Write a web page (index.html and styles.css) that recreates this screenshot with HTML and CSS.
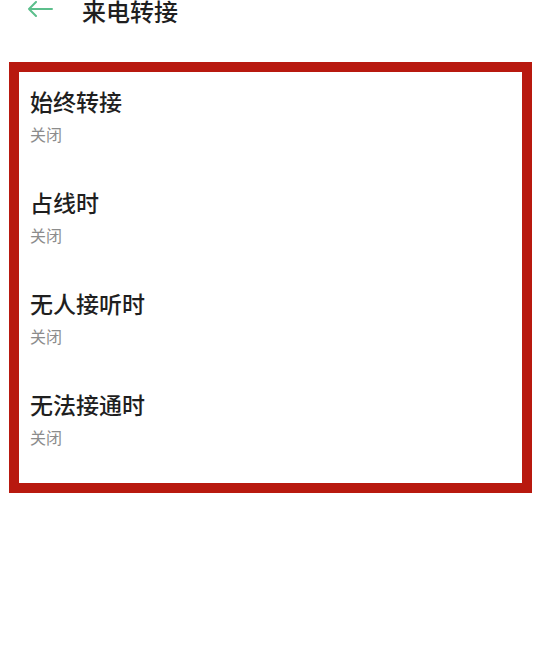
FILE: index.html
```html
<!DOCTYPE html>
<html lang="zh-CN">
<head>
    <meta charset="UTF-8">
    <title>来电转接</title>
    <link rel="stylesheet" href="styles.css">
</head>
<body>
    <div class="header">
        <svg class="back" width="26" height="16" viewBox="0 0 26 16">
            <path d="M25 8H2M9 1L2 8l7 7" fill="none" stroke="#5cbf8c" stroke-width="2" stroke-linecap="round" stroke-linejoin="round"/>
        </svg>
        <span class="title">来电转接</span>
    </div>

    <div class="panel">
        <div class="item">
            <div class="item-title">始终转接</div>
            <div class="item-sub">关闭</div>
        </div>
        <div class="item">
            <div class="item-title">占线时</div>
            <div class="item-sub">关闭</div>
        </div>
        <div class="item">
            <div class="item-title">无人接听时</div>
            <div class="item-sub">关闭</div>
        </div>
        <div class="item">
            <div class="item-title">无法接通时</div>
            <div class="item-sub">关闭</div>
        </div>
    </div>
</body>
</html>
```

FILE: styles.css
```css
body {
    margin: 0;
    background: #fff;
    font-family: "Noto Sans CJK SC", "Noto Sans", sans-serif;
}

/* Top bar */
.header {
    display: flex;
    align-items: center;
    height: 22px;
    padding-left: 27px;
}

.back {
    display: block;
    margin-top: -4px;
}

.title {
    margin-left: 29px;
    font-size: 24px;
    line-height: 22px;
    font-weight: 500;
    color: #1f1f1f;
}

/* Highlighted list */
.panel {
    margin: 40px 3px 0 9px;
    border: 10px solid #b8190f;
    padding: 0 0 7px 11px;
}

.item {
    padding: 13px 0 28px;
}

.item-title {
    font-size: 23px;
    line-height: 32px;
    font-weight: 500;
    color: #1f1f1f;
}

.item-sub {
    margin-top: 6px;
    font-size: 16px;
    line-height: 22px;
    color: #8c8c8c;
}
```
